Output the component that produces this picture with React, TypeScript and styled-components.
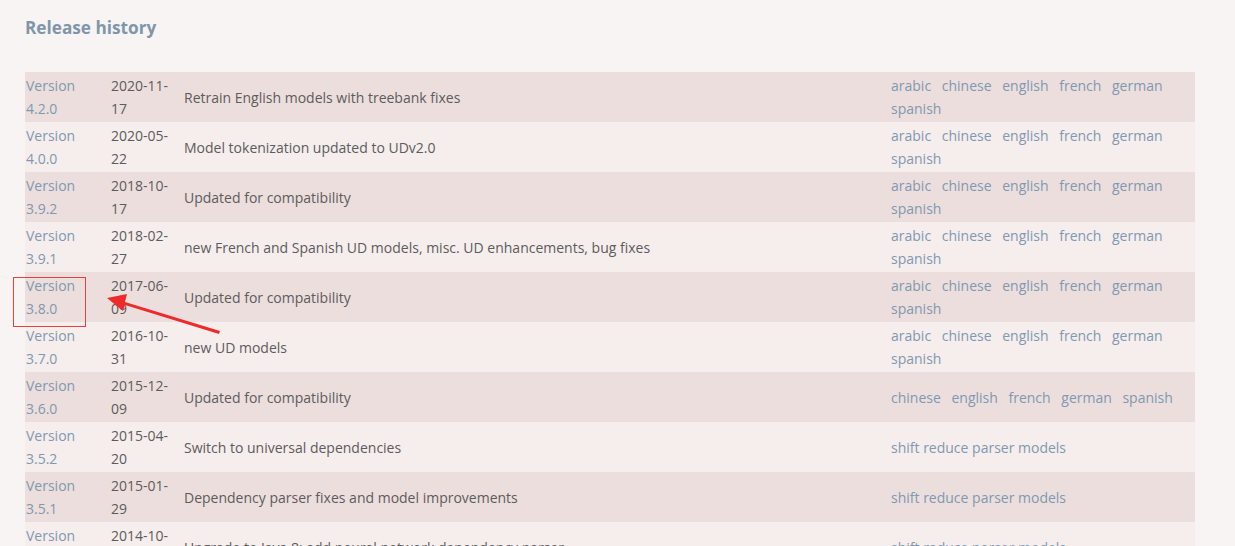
import * as React from "react";
import styled, { createGlobalStyle } from "styled-components";

const GlobalStyle = createGlobalStyle`
  html, body {
    margin: 0;
    padding: 0;
    background-color: #f8f4f3;
  }
  body {
    font-family: "Open Sans", "Liberation Sans", sans-serif;
    color: #5c5c5c;
    overflow: hidden;
  }
`;

const Page = styled.section`
  position: relative;
  padding: 15px 40px 0 25px;
`;

const Title = styled.h2`
  margin: 0 0 31px 0;
  font-size: 17.2px;
  line-height: 26px;
  font-weight: 700;
  color: #7f96aa;
`;

const Table = styled.table`
  width: 1170px;
  table-layout: fixed;
  border-collapse: collapse;
  font-size: 14px;
  line-height: 23px;
`;

const Row = styled.tr<{ $odd: boolean }>`
  height: 50px;
  background-color: ${(p) => (p.$odd ? "#ecdedd" : "#f6eded")};
`;

const Cell = styled.td`
  padding: 2px 1px;
  vertical-align: middle;
`;

const Link = styled.a`
  color: #7f99b0;
  text-decoration: none;
  margin-right: 7px;
`;

const Marker = styled.div`
  position: absolute;
  left: 13px;
  top: 277px;
  width: 71px;
  height: 48px;
  border: 1px solid #e8413d;
  pointer-events: none;
`;

const Arrow = styled.svg`
  position: absolute;
  left: 0;
  top: 0;
  pointer-events: none;
`;

type Release = {
  version: string;
  date: string;
  text: string;
  models: string[];
};

const allLangs = ["arabic", "chinese", "english", "french", "german", "spanish"];
const sr = ["shift reduce parser models"];

const releases: Release[] = [
  { version: "4.2.0", date: "2020-11-17", text: "Retrain English models with treebank fixes", models: allLangs },
  { version: "4.0.0", date: "2020-05-22", text: "Model tokenization updated to UDv2.0", models: allLangs },
  { version: "3.9.2", date: "2018-10-17", text: "Updated for compatibility", models: allLangs },
  { version: "3.9.1", date: "2018-02-27", text: "new French and Spanish UD models, misc. UD enhancements, bug fixes", models: allLangs },
  { version: "3.8.0", date: "2017-06-09", text: "Updated for compatibility", models: allLangs },
  { version: "3.7.0", date: "2016-10-31", text: "new UD models", models: allLangs },
  { version: "3.6.0", date: "2015-12-09", text: "Updated for compatibility", models: allLangs.slice(1) },
  { version: "3.5.2", date: "2015-04-20", text: "Switch to universal dependencies", models: sr },
  { version: "3.5.1", date: "2015-01-29", text: "Dependency parser fixes and model improvements", models: sr },
  { version: "3.5.0", date: "2014-10-26", text: "Upgrade to Java 8; add neural network dependency parser", models: sr },
];

export default function App() {
  return (
    <>
      <GlobalStyle />
      <Page>
        <Title>Release history</Title>
        <Table>
          <colgroup>
            <col style={{ width: 85 }} />
            <col style={{ width: 73 }} />
            <col style={{ width: 707 }} />
            <col style={{ width: 305 }} />
          </colgroup>
          <tbody>
            {releases.map((r, i) => (
              <Row key={r.version} $odd={i % 2 === 0}>
                <Cell>
                  <Link href="#">Version {r.version}</Link>
                </Cell>
                <Cell>{r.date}</Cell>
                <Cell>{r.text}</Cell>
                <Cell>
                  {r.models.map((m) => (
                    <React.Fragment key={m}>
                      <Link href="#">{m}</Link>{" "}
                    </React.Fragment>
                  ))}
                </Cell>
              </Row>
            ))}
          </tbody>
        </Table>
        <Marker />
        <Arrow width="240" height="340" viewBox="0 0 240 340">
          <polygon points="220,331 125,302 127,294 107,298 123,311 125,305 219,334" fill="#ee2b2b" />
        </Arrow>
      </Page>
    </>
  );
}
